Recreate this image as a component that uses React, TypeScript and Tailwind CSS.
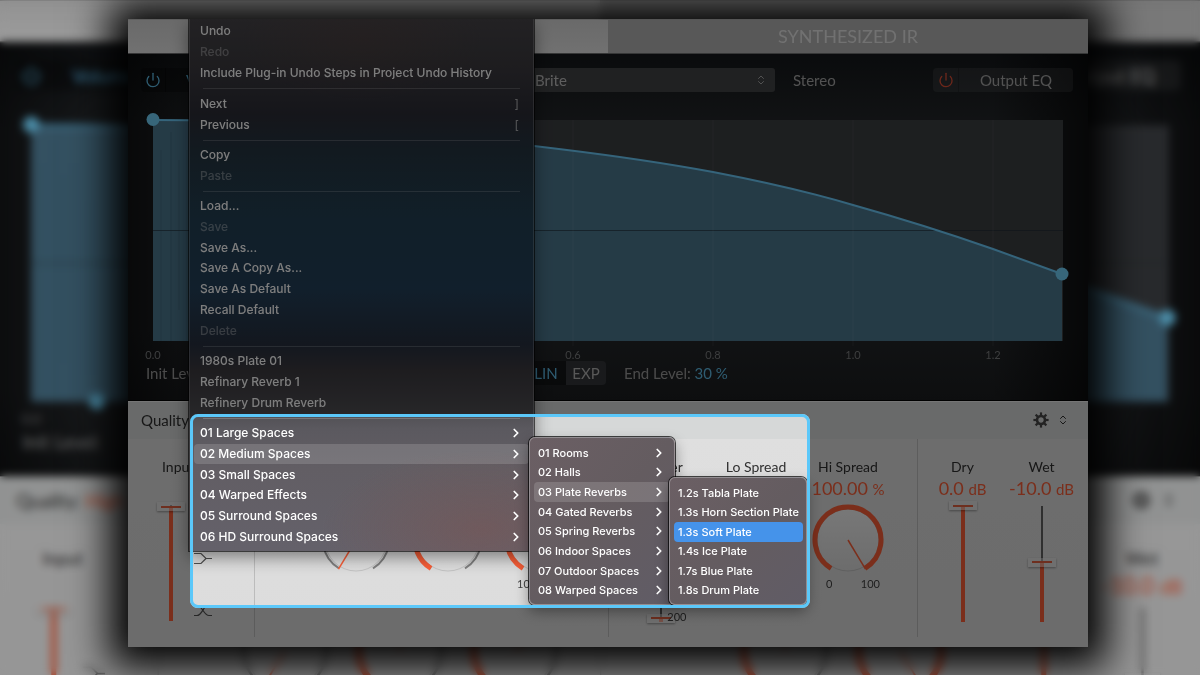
import React, { useId } from "react";
import { ChevronRight, ChevronsUpDown, Power } from "lucide-react";

type Entry = { label: string; disabled?: boolean; hint?: string; sub?: boolean; state?: "open" | "selected" };
type Group = { height: string; entries: Entry[] };

const mainMenu: Group[] = [
  {
    height: "h-[62px]",
    entries: [{ label: "Undo" }, { label: "Redo", disabled: true }, { label: "Include Plug-in Undo Steps in Project Undo History" }],
  },
  { height: "h-[42px]", entries: [{ label: "Next", hint: "]" }, { label: "Previous", hint: "[" }] },
  { height: "h-[41px]", entries: [{ label: "Copy" }, { label: "Paste", disabled: true }] },
  {
    height: "h-[145px]",
    entries: [
      { label: "Load..." },
      { label: "Save", disabled: true },
      { label: "Save As..." },
      { label: "Save A Copy As..." },
      { label: "Save As Default" },
      { label: "Recall Default" },
      { label: "Delete", disabled: true },
    ],
  },
  { height: "h-[62px]", entries: [{ label: "1980s Plate 01" }, { label: "Refinary Reverb 1" }, { label: "Refinery Drum Reverb" }] },
  {
    height: "h-[124px]",
    entries: [
      { label: "01 Large Spaces", sub: true },
      { label: "02 Medium Spaces", sub: true, state: "open" },
      { label: "03 Small Spaces", sub: true },
      { label: "04 Warped Effects", sub: true },
      { label: "05 Surround Spaces", sub: true },
      { label: "06 HD Surround Spaces", sub: true },
    ],
  },
];

const mediumMenu: Entry[] = [
  { label: "01 Rooms", sub: true },
  { label: "02 Halls", sub: true },
  { label: "03 Plate Reverbs", sub: true, state: "open" },
  { label: "04 Gated Reverbs", sub: true },
  { label: "05 Spring Reverbs", sub: true },
  { label: "06 Indoor Spaces", sub: true },
  { label: "07 Outdoor Spaces", sub: true },
  { label: "08 Warped Spaces", sub: true },
];

const plateMenu: Entry[] = [
  { label: "1.2s Tabla Plate" },
  { label: "1.3s Horn Section Plate" },
  { label: "1.3s Soft Plate", state: "selected" },
  { label: "1.4s Ice Plate" },
  { label: "1.7s Blue Plate" },
  { label: "1.8s Drum Plate" },
];

function MenuItem({ entry, className }: { entry: Entry; className: string }) {
  const tone =
    entry.state === "selected" ? "bg-[#4593ea] text-white" : entry.state === "open" ? "bg-white/15 text-white" : entry.disabled ? "text-white/35" : "text-white";
  return (
    <li role="none" className="flex">
      <button
        type="button"
        role="menuitem"
        disabled={entry.disabled}
        aria-haspopup={entry.sub ? "menu" : undefined}
        className={`flex flex-1 items-center justify-between rounded whitespace-nowrap font-medium ${className} ${tone}`}
      >
        <span>{entry.label}</span>
        {entry.hint && <span className="pr-1 font-normal text-white/60">{entry.hint}</span>}
        {entry.sub && <ChevronRight className="size-3.5" strokeWidth={3} />}
      </button>
    </li>
  );
}

function MainMenu() {
  return (
    <div
      role="menu"
      aria-label="Settings"
      className="absolute top-0 left-[61px] w-[345px] border-x border-white/20 bg-[radial-gradient(ellipse_160px_80px_at_85%_96%,rgba(130,80,75,0.4),transparent),radial-gradient(ellipse_120px_60px_at_50%_4%,rgba(90,65,60,0.3),transparent),linear-gradient(#48464a_0px,#3c3a40_50px,#2c2d36_95px,#253643_135px,#244054_200px,#24405a_270px,#273040_325px,#3c3a40_350px,#4e4d51_390px,#5b595f_410px,#625e64_450px,#64616a_532px)] px-1 pt-0.5 pb-1 shadow-[0_6px_16px_rgba(0,0,0,0.45),0_0_0_1px_rgba(0,0,0,0.6)]"
    >
      {mainMenu.map((group, i) => (
        <React.Fragment key={i}>
          {i > 0 && <div role="separator" className="mx-[9px] mt-[5px] mb-1 h-px bg-white/20" />}
          <ul role="group" className={`grid auto-rows-fr ${group.height}`}>
            {group.entries.map((entry) => (
              <MenuItem key={entry.label} entry={entry} className="px-1.5 text-[12px] leading-4" />
            ))}
          </ul>
        </React.Fragment>
      ))}
    </div>
  );
}

function SubMenu({ label, entries, className }: { label: string; entries: Entry[]; className: string }) {
  return (
    <ul
      role="menu"
      aria-label={label}
      className={`absolute grid auto-rows-fr rounded-md border border-white/30 bg-linear-to-br from-[#6b5f64] via-[#645c60] to-[#605c66] px-1 pt-[5px] pb-1 shadow-[0_0_0_1px_rgba(0,0,0,0.7),0_6px_14px_rgba(0,0,0,0.4)] ${className}`}
    >
      {entries.map((entry) => (
        <MenuItem key={entry.label} entry={entry} className="px-1 text-[11px] leading-4" />
      ))}
    </ul>
  );
}

function Fader({ id, level, name }: { id: string; level: number; name: string }) {
  return (
    <div className="relative mt-0.5 h-[116px] w-7">
      <div className="mx-auto h-full w-0.5 bg-[#606060]" />
      <div className="absolute inset-x-3 bottom-0 bg-[#fa5f38]" style={{ height: `${level}%` }} />
      <div
        className="absolute inset-x-0 flex h-[9px] translate-y-1 items-center justify-center bg-[#e8e8e8]/50 shadow-[0_1px_2px_rgba(0,0,0,0.35)]"
        style={{ bottom: `${level}%` }}
      >
        <div className="h-0.5 w-5 bg-[#e0603f]" />
      </div>
      <input
        id={id}
        aria-label={name}
        type="range"
        min={0}
        max={100}
        defaultValue={level}
        className="absolute inset-0 h-full w-full opacity-0 [direction:rtl] [writing-mode:vertical-lr]"
      />
    </div>
  );
}

function polar(deg: number, r: number) {
  const a = (deg * Math.PI) / 180;
  return `${(36 + r * Math.sin(a)).toFixed(2)} ${(36 - r * Math.cos(a)).toFixed(2)}`;
}

function arc(from: number, to: number) {
  return `M${polar(from, 33)}A33 33 0 ${to - from > 180 ? 1 : 0} 1 ${polar(to, 33)}`;
}

function Knob({ id, level, name }: { id: string; level: number; name: string }) {
  const start = 211;
  const end = 509;
  const at = start + ((end - start) * level) / 100;
  const fill = useId();
  return (
    <div className="relative size-[72px]">
      <svg viewBox="0 0 72 72" className="size-full" fill="none">
        <defs>
          <linearGradient id={fill} x1="0" y1="0" x2="0" y2="1">
            <stop offset="0" stopColor="#f4f4f4" />
            <stop offset="1" stopColor="#dddddd" />
          </linearGradient>
        </defs>
        <circle cx="36" cy="36" r="31" fill={`url(#${fill})`} stroke="#c4c4c4" strokeWidth="1" />
        <path d={arc(start, end)} stroke="#808080" strokeWidth="2" />
        {level > 0 && <path d={arc(start, at)} stroke="#fa5f38" strokeWidth="5" />}
        <path d={`M36 36L${polar(at, 34)}`} stroke="#fa5f38" strokeWidth="1.5" />
      </svg>
      <input id={id} aria-label={name} type="range" min={0} max={100} defaultValue={level} className="absolute inset-0 size-full opacity-0" />
    </div>
  );
}

function Caption({ htmlFor, label, value, unit }: { htmlFor: string; label: string; value?: string; unit?: string }) {
  return (
    <div className="flex flex-col items-center whitespace-nowrap">
      <label htmlFor={htmlFor} className="h-5 text-[14px] leading-5 text-[#303030]">
        {label}
      </label>
      {value ? (
        <output htmlFor={htmlFor} className="mt-px mb-[6px] h-5 text-[18px] leading-5 text-[#fa5f38]">
          {value} <span className="text-[15px]">{unit}</span>
        </output>
      ) : (
        <div className="h-[27px]" />
      )}
    </div>
  );
}

function Graph() {
  const curve = "M0 0C130 0 270 13 381 26C450 34 506 42 560 52C612 62 660 73 700 85C750 99 800 115 840 129L909 154";
  const columns = [140, 280, 420, 560, 700, 840];
  return (
    <svg viewBox="0 0 910 221" preserveAspectRatio="none" className="h-[221px] w-full overflow-visible" fill="none">
      <rect width="910" height="221" fill="#3c3f43" />
      <path d={`${curve}V221H0Z`} fill="#4d7890" />
      <path d="M0 110.500H910" stroke="#1c2a33" strokeOpacity=".6" />
      {columns.map((x) => (
        <path key={x} d={`M${x} 0V226`} stroke="#ffffff" strokeOpacity=".07" />
      ))}
      <path d="M8 30V221M18 12V221M26 40V190M34 30V221M48 60V200" stroke="#2c4a5c" strokeOpacity=".25" />
      <path d={curve} stroke="#6cccfa" strokeWidth="2" />
      <circle cx="0" cy="-.5" r="6.500" fill="#70d0f8" />
      <circle cx="53" cy="221" r="6.500" fill="#70d0f8" />
      <circle cx="909" cy="154" r="6.500" fill="#70d0f8" />
    </svg>
  );
}

function Gear() {
  return (
    <svg viewBox="-8 -8 16 16" className="size-4" fill="none" stroke="#484848">
      <circle r="4" strokeWidth="2.600" />
      {[0, 45, 90, 135, 180, 225, 270, 315].map((a) => (
        <path key={a} d="M0 -4.500V-7.600" strokeWidth="2.200" transform={`rotate(${a})`} />
      ))}
    </svg>
  );
}

const ticks = ["0.0", "", "", "0.6", "0.8", "1.0", "1.2"];

function Reverb() {
  const uid = useId();
  return (
    <div className="font-['Lato','Open_Sans',sans-serif]">
      <div className="grid h-[35px] grid-cols-2 border-y border-white/40 text-[18px]">
        <button type="button" aria-label="Sampled IR" className="bg-linear-to-b from-[#d8d8d8] to-[#e6e6e6]" />
        <button type="button" className="bg-[#b3b3b3] text-[#e6e6e6]">
          <span className="core">SYNTHESIZED IR</span>
        </button>
      </div>

      <div className="flex h-[347px] flex-col border-b border-black bg-[linear-gradient(90deg,rgba(0,0,0,0.5),transparent_8%,transparent_90%,rgba(0,0,0,0.6)),linear-gradient(#15181b,#24272a_20%,#24272a_80%,#1c1e20)]">
        <div className="mt-[14px] flex h-[24px] items-stretch pr-[15px] pl-[13px] text-[15px] text-[#a8a8a8]">
          <button type="button" className="flex w-[140px] items-center rounded bg-black/25 text-[#5ebbe6]">
            <span className="flex h-full w-[25px] items-center justify-center border-r border-black/30">
              <Power className="size-4" strokeWidth={2} />
            </span>
            <span className="pl-[20px]">Volume</span>
          </button>
          <div className="core relative ml-[219px] flex min-w-0 flex-1">
            <select aria-label="Impulse response" className="w-full appearance-none rounded-[3px] bg-[#434547] pl-[35px] text-[15px] text-[#c0c0c0]">
              <option>Brite</option>
            </select>
            <ChevronsUpDown className="pointer-events-none absolute top-1.5 right-2 size-3" />
          </div>
          <span className="core ml-[18px] flex w-[140px] items-center">Stereo</span>
          <button type="button" className="flex w-[140px] items-center rounded bg-white/8">
            <span className="flex h-full w-[26px] items-center justify-center border-r border-black/20 text-[#dc5036]">
              <Power className="size-4" strokeWidth={2} />
            </span>
            <span className="flex-1 text-center">Output EQ</span>
          </button>
        </div>
        <div className="mx-[25px] mt-[28px]">
          <Graph />
        </div>
        <div className="mx-[25px] mt-1.5 grid h-4 grid-cols-[repeat(6,2fr)_1fr] text-[11px] leading-4 text-[#7c7e80]">
          {ticks.map((t, i) => (
            <span key={i} className={i > 0 ? "core -ml-3 w-6 text-center" : "-ml-3 w-6 text-center"}>
              {t}
            </span>
          ))}
        </div>
        <div className="-mt-0.5 flex h-6 items-stretch pl-[18px] text-[15px] leading-6 whitespace-nowrap text-[#9a9a9a]">
          <span className="w-[374px]">Init Level:</span>
          <button type="button" className="core w-[46px] bg-black/30 pl-1.5 text-[#5ebbe6]">
            LIN
          </button>
          <button type="button" className="core w-10 rounded-r bg-[#34363a] text-[#b4b4b4]">
            EXP
          </button>
          <span className="core ml-[18px]">
            End Level: <span className="text-[#5ebbe6]">30 %</span>
          </span>
        </div>
      </div>

      <div className="flex h-[38px] items-center justify-between border-t border-white/60 bg-[#d6d8d8] pr-[19px] pb-px pl-[13px] text-[15px] text-[#303030]">
        <span>
          Quality: <span className="text-[#fa5f38]">High</span>
        </span>
        <button type="button" aria-label="Settings" className="flex items-center gap-2">
          <Gear />
          <ChevronsUpDown className="size-3" />
        </button>
      </div>

      <div className="grid h-[208px] grid-cols-[127fr_354fr_309fr_170fr] divide-x divide-black/15 bg-linear-to-b from-[#dfdfdf] to-[#dcdcdc] pb-[10px]">
        <div className="flex flex-col pt-[18px]">
          <label htmlFor={`${uid}in`} className="mb-[26px] h-5 pl-[34px] text-[14px] leading-5 text-[#303030]">
            Input
          </label>
          <div className="flex gap-[9px] pl-[29px]">
            <Fader id={`${uid}in`} name="Input" level={98} />
            <svg viewBox="0 0 18 116" className="mt-0.5 h-[116px] w-[18px]" fill="none" stroke="#505050" strokeWidth="1.200">
              <path d="M0 48.500H7L12 53.500H18M0 58.500H7L12 53.500" />
              <path d="M0 100.500H3C9 101 9.500 110.500 15 110.500H18M0 110.500H3C8 110.500 9 101 14 100.500H18" />
            </svg>
          </div>
        </div>

        <div className="flex pt-[65px] pl-[55px]">
          <div className="flex w-[92px] justify-center">
            <Knob id={`${uid}k1`} name="Knob 1" level={0} />
          </div>
          <div className="flex w-[92px] justify-center">
            <Knob id={`${uid}k2`} name="Knob 2" level={50} />
          </div>
          <div className="flex w-[92px] flex-col items-center">
            <Knob id={`${uid}k3`} name="Knob 3" level={66} />
            <span className="core flex w-[62px] pl-2 text-[11px] text-[#404040]">10</span>
          </div>
        </div>

        <div className="core flex pt-[18px]">
          <div className="flex w-[101px] flex-col items-center pl-0.5">
            <Caption htmlFor={`${uid}x`} label="X-Over" />
            <div className="relative">
              <Fader id={`${uid}x`} name="X-Over" level={3} />
              <span className="absolute -right-3 -bottom-px text-[11px] leading-[12px] text-[#404040]">200</span>
            </div>
          </div>
          <div className="flex w-[92px] flex-col items-center">
            <Caption htmlFor={`${uid}lo`} label="Lo Spread" />
            <div className="visible">
              <Knob id={`${uid}lo`} name="Lo Spread" level={50} />
            </div>
          </div>
          <div className="flex w-[92px] flex-col items-center">
            <Caption htmlFor={`${uid}hi`} label="Hi Spread" value="100.00" unit="%" />
            <div className="visible">
              <Knob id={`${uid}hi`} name="Hi Spread" level={100} />
            </div>
            <span className="flex w-full justify-between pr-[14px] pl-6 text-[11px] text-[#404040]">
              <span>0</span>
              <span>100</span>
            </span>
          </div>
        </div>

        <div className="flex pt-[18px] pl-[5px]">
          <div className="flex w-[79px] flex-col items-center">
            <div className="core">
              <Caption htmlFor={`${uid}dry`} label="Dry" value="0.0" unit="dB" />
            </div>
            <Fader id={`${uid}dry`} name="Dry" level={100} />
          </div>
          <div className="flex w-[79px] flex-col items-center">
            <Caption htmlFor={`${uid}wet`} label="Wet" value="-10.0" unit="dB" />
            <Fader id={`${uid}wet`} name="Wet" level={51} />
          </div>
        </div>
      </div>
    </div>
  );
}

export default function App() {
  return (
    <main className="relative min-h-screen overflow-hidden bg-black">
      {/* Enlarged copy behind the window; only the labels outside the window's outline are kept. */}
      <div aria-hidden="true" inert className="absolute -top-px left-0 w-4/5 origin-top-left scale-125 [&_.core]:invisible">
        <Reverb />
      </div>
      <div className="absolute inset-0 bg-black/32 backdrop-blur-[4px]" />
      <div className="relative h-[19px]" />
      <section className="relative mb-7 ml-32 w-4/5 overflow-hidden shadow-[0_2px_38px_18px_#000]">
        <Reverb />
        <div className="font-['Inter',sans-serif]">
          <MainMenu />
          <SubMenu label="02 Medium Spaces" entries={mediumMenu} className="top-[418px] left-[401px] h-[168px] w-[146px]" />
          <SubMenu label="03 Plate Reverbs" entries={plateMenu} className="top-[458px] left-[541px] h-[128px] w-[138px]" />
        </div>
        <div className="pointer-events-none absolute top-[395px] left-[62px] h-[194px] w-[620px] rounded-lg border-3 border-[#5bc8fa] shadow-[0_0_0_2000px_rgba(0,0,0,0.51)]" />
      </section>
    </main>
  );
}
